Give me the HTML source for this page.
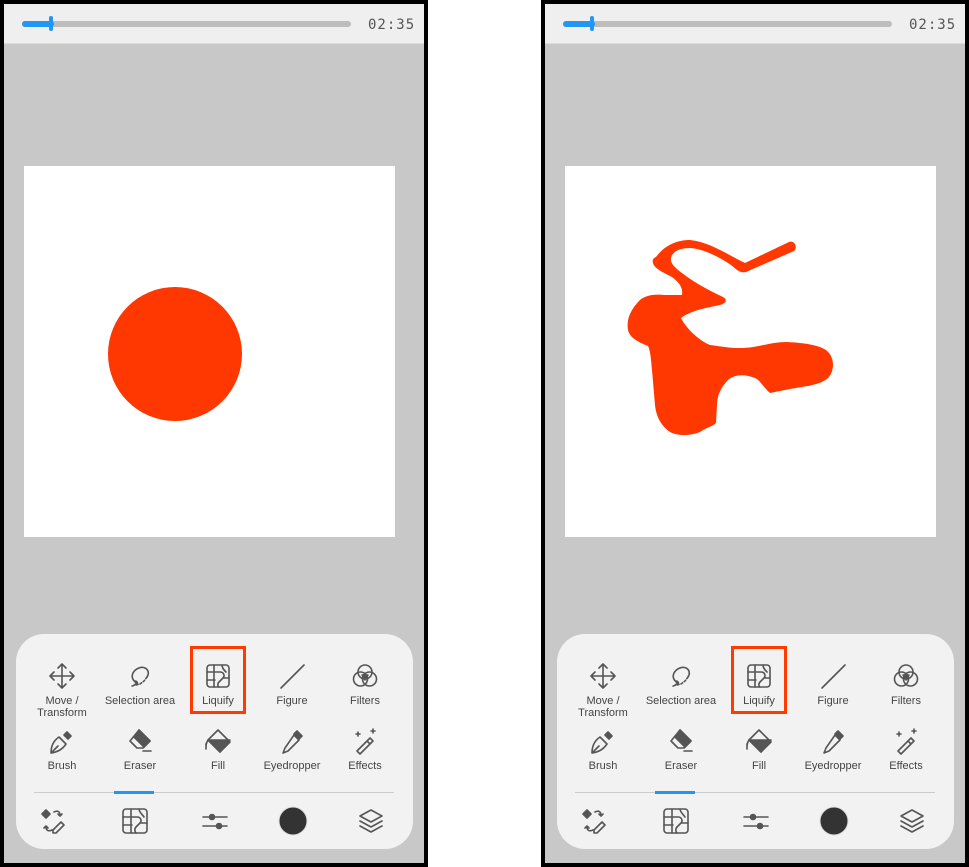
<!DOCTYPE html>
<html><head><meta charset="utf-8"><style>
*{margin:0;padding:0;box-sizing:border-box}
body{width:969px;height:867px;background:#fff;position:relative;overflow:hidden;font-family:"Liberation Sans",sans-serif}
.ph{position:absolute;top:0;width:428px;height:867px;background:#000}
.in{position:absolute;left:4px;top:4px;width:420px;height:859px;background:#c8c8c8;overflow:hidden}
.top{position:absolute;left:0;top:0;width:420px;height:40px;background:#efefef;border-bottom:1px solid #ddd}
.trk{position:absolute;left:18px;top:17px;width:329px;height:6px;border-radius:3px;background:#bdbdbd}
.fill{position:absolute;left:18px;top:17px;width:32px;height:6px;border-radius:3px;background:#2196f3}
.th{position:absolute;left:45px;top:12px;width:4px;height:15px;border-radius:2px;background:#2196f3}
.time{position:absolute;left:364px;top:13px;font-size:14px;color:#555;letter-spacing:1px;font-family:"DejaVu Sans Mono",monospace}
.cv{position:absolute;left:20px;top:162px;width:371px;height:371px;background:#fff}
.pn{position:absolute;left:12px;top:630px;width:397px;height:215px;background:#f2f2f2;border-radius:28px}
.it{position:absolute;width:80px;text-align:center;font-size:11px;color:#444;line-height:12px}
.it svg{display:block;margin:0 auto 4px}
.sel{position:absolute;left:174px;top:12px;width:56px;height:68px;border:3px solid #ff3b00}
.dv{position:absolute;left:18px;top:158px;width:360px;height:1px;background:#ccc}
.bl{position:absolute;left:98px;top:157px;width:40px;height:3px;background:#2196f3}
.bi{position:absolute;top:172px}
svg{fill:none;stroke:#555;stroke-width:1.6;stroke-linecap:round;stroke-linejoin:round}
</style></head><body>

<div class="ph" style="left:0">
<div class="in">
<div class="top"><div class="trk"></div><div class="fill"></div><div class="th"></div><div class="time">02:35</div></div>
<div class="cv"><svg width="371" height="371" style="position:absolute;left:0;top:0"><circle cx="151" cy="188" r="67" fill="#ff3700" stroke="none"/></svg></div>
<div class="pn" id="p1"></div>
</div></div>

<div class="ph" style="left:541px">
<div class="in">
<div class="top"><div class="trk"></div><div class="fill"></div><div class="th"></div><div class="time">02:35</div></div>
<div class="cv"><svg width="371" height="371" viewBox="565 166 371 371" style="position:absolute;left:0;top:0"><path fill="#ff3700" stroke="none" d="M656,257 C664,246 676,240 690,240 C710,242 730,256 745,263 L789,242 C795,240 798,248 794,251 L746,272 C740,274 735,268 731,265 C718,256 703,249 690,248 C679,248 672,252 671,258 C670,265 678,270 686,276 C697,284 712,292 723,297 C728,300 726,303 720,305 C705,308 690,311 681,318 C686,328 698,340 710,345 C730,348 740,349 753,347 C765,345 775,342 787,342 C805,343 818,345 826,350 C836,358 834,372 828,378 C820,385 807,386 790,389 L770,393 C764,388 760,380 755,378 C745,374 735,374 728,380 C720,388 717,397 717,405 L716,423 C712,427 707,427 700,432 C690,436 678,436 670,432 C660,425 656,415 655,405 L652,370 C651,357 650,350 648,346 C638,342 630,338 628,330 C626,318 632,308 640,300 C646,295 655,294 665,295 L682,295 C683,288 680,283 672,277 C662,272 654,268 653,263 C652,259 654,258 656,257 Z"/></svg></div>
<div class="pn" id="p2"></div>
</div></div>

<template id="tp">
<div class="sel"></div>
<div class="it" style="left:6px;top:27px"><svg width="30" height="30" viewBox="0 0 30 30"><path d="M15 3v24M3 15h24M11 7l4-4 4 4M11 23l4 4 4-4M7 11l-4 4 4 4M23 11l4 4-4 4"/></svg>Move /<br>Transform</div>
<div class="it" style="left:84px;top:27px"><svg width="30" height="30" viewBox="0 0 30 30"><path d="M12 22c-4-2-6-6-4-10s8-7 12-5 4 6 2 9" /><path d="M22 16l-3 4-4 3-4 1" stroke-dasharray="2 2"/><path d="M12 22c-2 1-3 3-5 3M10 20c2 0 3 2 2 3"/></svg><div style="margin-top:4px">Selection area</div></div>
<div class="it" style="left:162px;top:27px"><svg width="30" height="30" viewBox="0 0 30 30"><rect x="4" y="4" width="22" height="22" rx="3"/><path d="M4 11h13c4 0 5 4 3 6l-4 4c-2 2-1 5 0 5M4 19h8M11 4v22M19 4c0 3 2 5 4 7M26 17h-6"/></svg><div style="margin-top:4px">Liquify</div></div>
<div class="it" style="left:236px;top:27px"><svg width="30" height="30" viewBox="0 0 30 30"><path d="M4 27L27 4"/></svg><div style="margin-top:4px">Figure</div></div>
<div class="it" style="left:309px;top:27px"><svg width="30" height="30" viewBox="0 0 30 30"><circle cx="15" cy="11" r="7"/><circle cx="10.5" cy="18" r="7"/><circle cx="19.5" cy="18" r="7"/><path d="M12 14h6l-3 5z" fill="#555"/></svg><div style="margin-top:4px">Filters</div></div>

<div class="it" style="left:6px;top:92px"><svg width="30" height="30" viewBox="0 0 30 30"><path d="M4 27c0-6 2-12 8-16l7 7c-4 6-9 8-15 9zM4 27l7-7" /><path d="M17 9l3-3 4 4-3 3z" fill="#555"/></svg><div style="margin-top:4px">Brush</div></div>
<div class="it" style="left:84px;top:92px"><svg width="30" height="30" viewBox="0 0 30 30"><path d="M14 4l11 11-7 7H12l-7-7z"/><path d="M14 4l11 11-6 6L9 11z" fill="#555"/><path d="M18 25h8"/></svg><div style="margin-top:4px">Eraser</div></div>
<div class="it" style="left:162px;top:92px"><svg width="30" height="30" viewBox="0 0 30 30"><path d="M15 4l12 12-10 10L5 14z"/><path d="M5 14h22L17 26zM5 14l-2 4v5" fill="#555"/></svg><div style="margin-top:4px">Fill</div></div>
<div class="it" style="left:236px;top:92px"><svg width="30" height="30" viewBox="0 0 30 30"><path d="M17 9l5 5-11 11-5 2 2-5z"/><path d="M20 5l5 5-3 3-5-5z" fill="#555"/></svg><div style="margin-top:4px">Eyedropper</div></div>
<div class="it" style="left:309px;top:92px"><svg width="30" height="30" viewBox="0 0 30 30"><path d="M7 25l13-13 3 3-13 13zM17 15l3 3"/><path d="M8 6v4M6 8h4M23 3v4M21 5h4" /></svg><div style="margin-top:4px">Effects</div></div>

<div class="dv"></div><div class="bl"></div>
<svg class="bi" style="left:22px" width="30" height="30" viewBox="0 0 30 30"><path d="M4 8l4-4 4 4-4 4z" fill="#555"/><path d="M16 6c4-2 6 0 6 3M20 8l2 2 2-2M14 24c-4 2-6 0-6-3M10 22l-2-2-2 2M15 24l8-8 3 3-8 8h-3z"/></svg>
<svg class="bi" style="left:104px" width="30" height="30" viewBox="0 0 30 30"><rect x="3" y="3" width="24" height="24" rx="3"/><path d="M3 11h14c4 0 5 4 3 6l-4 4c-2 2-1 5 0 6M3 19h9M11 3v24M19 3c0 3 3 5 5 8M27 17h-6"/></svg>
<svg class="bi" style="left:184px" width="30" height="30" viewBox="0 0 30 30"><path d="M3 11h24M3 20h24"/><circle cx="12" cy="11" r="2.5" fill="#555"/><circle cx="19" cy="20" r="2.5" fill="#555"/></svg>
<svg class="bi" style="left:261px;top:171px" width="32" height="32"><circle cx="16" cy="16" r="14" fill="#333" stroke="#ddd" stroke-width="1"/></svg>
<svg class="bi" style="left:340px" width="30" height="30" viewBox="0 0 30 30"><path d="M15 4l11 6-11 6-11-6z"/><path d="M4 15l11 6 11-6M4 20l11 6 11-6"/></svg>
</template>
<script>
var t=document.getElementById('tp').innerHTML;
document.getElementById('p1').innerHTML=t;document.getElementById('p2').innerHTML=t;
</script>
</body></html>
